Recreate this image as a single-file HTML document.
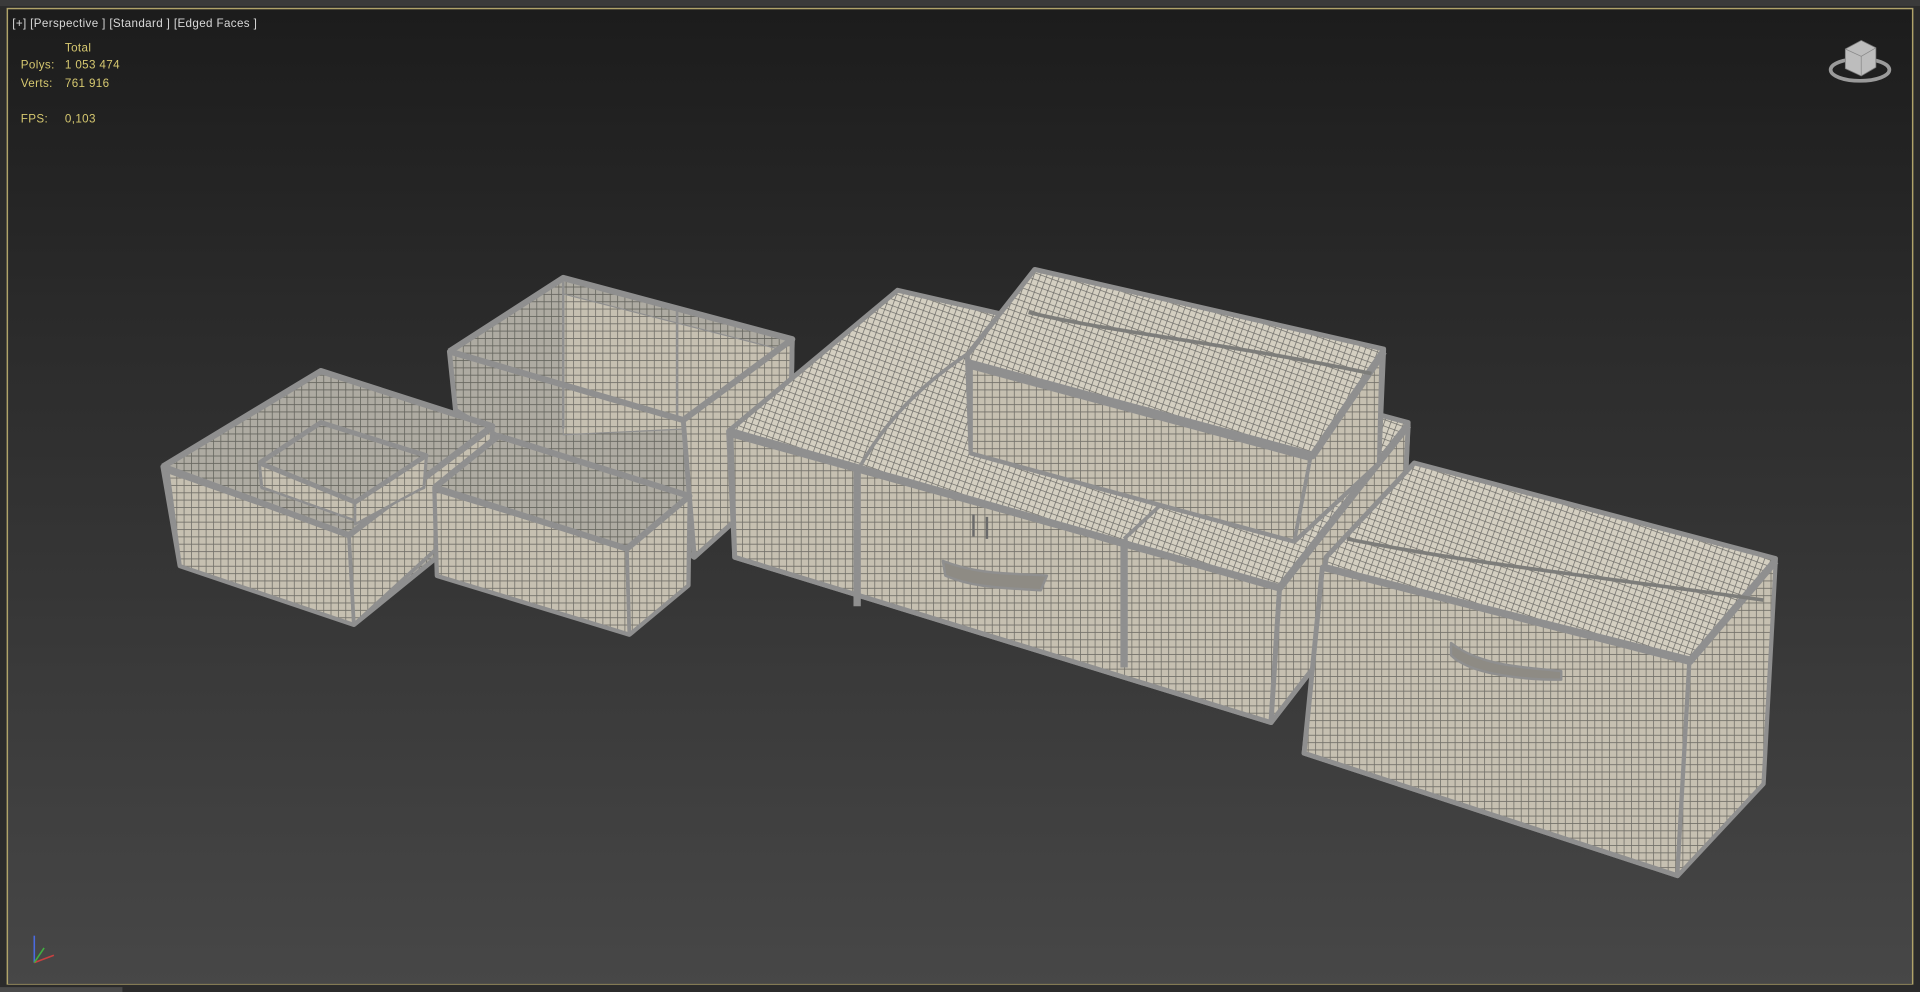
<!DOCTYPE html>
<html><head><meta charset="utf-8"><style>
html,body{margin:0;padding:0;width:1920px;height:992px;overflow:hidden;background:#2a2a2a}
svg{display:block}
.t{font-family:"Liberation Sans",sans-serif;font-size:9.5px;letter-spacing:0.3px}
</style></head><body>
<svg width="1920" height="992" viewBox="0 0 1568 810" preserveAspectRatio="none">
<defs>
<linearGradient id="bg" x1="0" y1="0" x2="0" y2="1">
<stop offset="0" stop-color="#1c1c1c"/><stop offset="0.35" stop-color="#2c2c2c"/><stop offset="1" stop-color="#474747"/>
</linearGradient>
<pattern id="g" width="6" height="6" patternUnits="userSpaceOnUse">
<rect width="6" height="6" fill="#c6c0b1"/><path d="M0 0.3H6M0.3 0V6" stroke="#727069" stroke-width="0.7"/>
</pattern>
<pattern id="gt" width="5" height="5" patternUnits="userSpaceOnUse" patternTransform="rotate(20)">
<rect width="5" height="5" fill="#d4cfc1"/><path d="M0 0.3H5M0.3 0V5" stroke="#6e6d69" stroke-width="0.6"/>
</pattern>
<pattern id="gi" width="6" height="6" patternUnits="userSpaceOnUse">
<rect width="6" height="6" fill="#aeaba2"/><path d="M0 0.3H6M0.3 0V6" stroke="#66665f" stroke-width="0.7"/>
</pattern>
</defs>
<rect width="1568" height="810" fill="#2b2b2b"/>
<rect x="0" y="0" width="1568" height="5" fill="#3a3a3a"/>
<rect x="6" y="7" width="1556" height="797" fill="url(#bg)" stroke="#b0a36a" stroke-width="1.2"/>
<text class="t" x="10" y="22" fill="#d8d8d8">[+] [Perspective ] [Standard ] [Edged Faces ]</text>
<g class="t" fill="#d6c870">
<text x="53" y="42">Total</text>
<text x="17" y="56">Polys:</text><text x="53" y="56">1 053 474</text>
<text x="17" y="71">Verts:</text><text x="53" y="71">761 916</text>
<text x="17" y="100">FPS:</text><text x="53" y="100">0,103</text>
</g>
<ellipse cx="1519" cy="57" rx="24" ry="9" fill="none" stroke="#9a9a9a" stroke-width="3"/>
<path d="M1507 40L1520 33L1532 39L1532 55L1520 62L1507 56Z" fill="#bdbdbd" stroke="#777" stroke-width="0.6"/>
<path d="M1507 40L1520 46L1532 39M1520 46V62" stroke="#888" fill="none" stroke-width="0.6"/>
<path d="M28 786V764" stroke="#4a6ae0" stroke-width="1.3"/><path d="M28 786L44 780" stroke="#c84040" stroke-width="1.3"/><path d="M28 786L36 774" stroke="#40b040" stroke-width="1.3"/>

<g stroke="#8f8f8f" stroke-linejoin="round">
<polygon points="367,287 460,227 647,277 645,385 567,455 372,335" fill="url(#gi)" stroke-width="4"/>
<polygon points="460,240 640,286 640,378 565,350 460,355" fill="url(#g)" stroke-width="1"/>
<polygon points="558,343 647,277 645,385 567,455" fill="url(#g)" stroke-width="4"/>
<polyline points="367,287 460,227 647,277 558,343 367,287" fill="none" stroke-width="5"/>
<path d="M460 230V350M553 250V340" stroke-width="2"/>
<polygon points="133,381 262,303 402,348 400,420 289,510 147,462" fill="url(#gi)" stroke-width="4"/>
<polygon points="137,385 285,437 289,510 147,462" fill="url(#g)" stroke-width="3"/>
<polygon points="285,437 402,350 398,410 289,510" fill="url(#g)" stroke-width="3"/>
<polyline points="133,381 262,303 402,348 285,437 133,381" fill="none" stroke-width="5"/>
<polygon points="212,378 262,345 348,372 346,398 290,420 214,398" fill="url(#gi)" stroke-width="3"/>
<polygon points="212,378 290,410 290,425 214,398" fill="url(#g)" stroke-width="2"/>
<polygon points="290,410 348,372 346,398 290,428" fill="url(#g)" stroke-width="2"/>
<polyline points="212,378 262,345 348,372 290,410 212,378" fill="none" stroke-width="4"/>
<polygon points="355,398 407,356 563,405 562,478 514,518 357,470" fill="url(#gi)" stroke-width="4"/>
<polygon points="355,400 512,448 514,518 357,470" fill="url(#g)" stroke-width="3"/>
<polygon points="512,448 563,405 562,478 514,518" fill="url(#g)" stroke-width="3"/>
<polyline points="355,398 407,356 563,405 512,448 355,398" fill="none" stroke-width="5"/>
<polygon points="595,352 733,237 825,258 1150,345 1145,452 1038,590 600,455" fill="url(#gt)" stroke-width="4"/>
<polygon points="597,355 1045,480 1038,590 600,455" fill="url(#g)" stroke-width="4"/>
<polygon points="1045,480 1150,347 1145,452 1038,590" fill="url(#g)" stroke-width="4"/>
<path d="M700 385V495M918 440V545M595 352L1045 480L1150 347" fill="none" stroke-width="6"/>
<path d="M700 385C730 330 770 300 820 270M918 440C940 420 960 400 990 375" fill="none" stroke-width="3"/>
<path d="M770 458C800 470 830 468 855 470L850 482C820 480 795 480 772 470Z" fill="#8e8b84" stroke-width="2"/>
<path d="M795 420V438M806 422V440" stroke="#6a6a6a" stroke-width="2"/>
<polygon points="790,290 845,220 1130,285 1126,378 1057,442 793,370" fill="url(#gt)" stroke-width="4"/>
<polygon points="793,300 1070,375 1057,442 793,370" fill="url(#g)" stroke-width="3"/>
<polygon points="1070,375 1128,290 1126,378 1057,442" fill="url(#g)" stroke-width="3"/>
<path d="M790 296L1072 372L1130 287" fill="none" stroke-width="6"/>
<path d="M840 255C900 270 1000 280 1120 305" fill="none" stroke="#7d7d7a" stroke-width="3"/>
<polygon points="1083,455 1155,378 1450,456 1440,640 1370,715 1065,615" fill="url(#gt)" stroke-width="4"/>
<polygon points="1080,463 1380,538 1370,715 1065,615" fill="url(#g)" stroke-width="4"/>
<polygon points="1380,538 1450,458 1440,640 1370,715" fill="url(#g)" stroke-width="3"/>
<path d="M1080 463L1380 540L1450 458" fill="none" stroke-width="6"/>
<path d="M1100 440C1200 460 1300 470 1440 490" fill="none" stroke="#7d7d7a" stroke-width="3"/>
<path d="M1185 525C1210 545 1250 545 1275 548L1275 555C1240 555 1200 550 1185 535Z" fill="#8e8b84" stroke-width="2"/>
</g>
<rect x="0" y="804" width="1568" height="6" fill="#2b2b2b"/>
<rect x="0" y="806" width="100" height="4" fill="#4a4a4a"/>
</svg>
</body></html>
